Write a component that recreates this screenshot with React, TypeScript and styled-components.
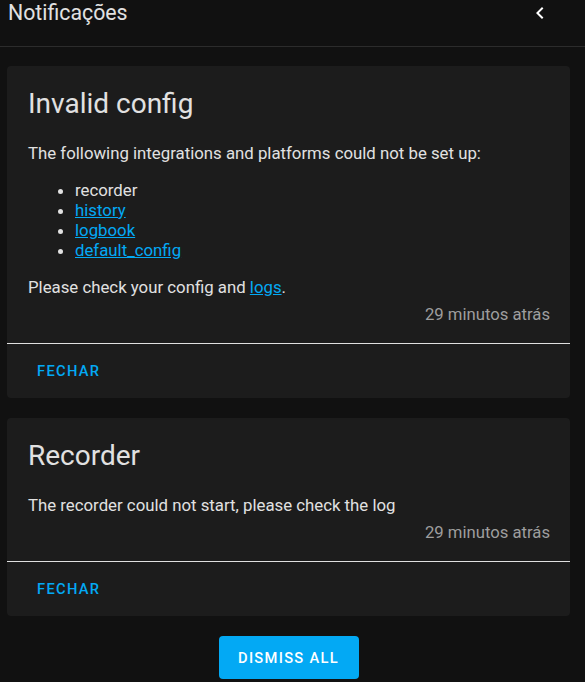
import * as React from 'react';
import styled, { createGlobalStyle } from 'styled-components';

const GlobalStyle = createGlobalStyle`
    html, body {
        margin: 0;
        padding: 0;
        background: #111111;
    }
    body {
        font-family: Roboto, "Noto Sans", "Liberation Sans", sans-serif;
        color: #e1e1e1;
        -webkit-font-smoothing: antialiased;
    }
`;

const Page = styled.div`
    width: 585px;
    height: 682px;
    overflow: hidden;
    background: #111111;
`;

const Header = styled.div`
    display: flex;
    align-items: flex-start;
    justify-content: space-between;
    height: 46px;
    padding: 0 33px 0 8px;
    border-bottom: 1px solid #2c2c2c;
    box-sizing: content-box;
`;

const Title = styled.div`
    font-size: 21.3px;
    line-height: 26px;
    color: #e1e1e1;
`;

const BackButton = styled.div`
    display: flex;
    align-items: center;
    justify-content: center;
    width: 24px;
    height: 26px;
    color: #ffffff;
`;

const Content = styled.div`
    display: flex;
    flex-direction: column;
    gap: 20px;
    padding: 19px 15px 0 7px;
`;

const Card = styled.div`
    background: #1c1c1c;
    border-radius: 4px;
    display: flex;
    flex-direction: column;
`;

const CardBody = styled.div`
    padding: 18px 20px 18px 21px;
`;

const CardTitle = styled.div`
    font-size: 28px;
    line-height: 40px;
    color: #e1e1e1;
    margin-bottom: 19px;
`;

const Text = styled.p`
    margin: 0;
    font-size: 16.8px;
    line-height: 20px;
    color: #e1e1e1;
`;

const List = styled.ul`
    margin: 17px 0;
    padding-left: 47px;
    font-size: 16.8px;
    line-height: 20px;
    color: #e1e1e1;
`;

const Link = styled.a`
    color: #03a9f4;
    text-decoration: underline;
`;

const Time = styled.div`
    margin-top: 8px;
    text-align: right;
    font-size: 16.7px;
    line-height: 20px;
    color: #9e9e9e;
`;

const Divider = styled.div`
    height: 1px;
    background: #e0e0e0;
`;

const Actions = styled.div`
    display: flex;
    align-items: center;
    height: 54px;
    padding-left: 22px;
`;

const TextButton = styled.button`
    background: none;
    border: none;
    padding: 8px;
    font-family: inherit;
    font-size: 14.7px;
    font-weight: 500;
    letter-spacing: 1.3px;
    color: #03a9f4;
    cursor: pointer;
`;

const Footer = styled.div`
    display: flex;
    justify-content: center;
    padding: 20px 15px 0 7px;
`;

const PrimaryButton = styled.button`
    width: 140px;
    height: 43px;
    border: none;
    border-radius: 4px;
    background: #03a9f4;
    color: #ffffff;
    font-family: inherit;
    font-size: 14.7px;
    font-weight: 500;
    letter-spacing: 1.3px;
    cursor: pointer;
`;

const Chevron = () => (
    <svg width="24" height="24" viewBox="0 0 24 24">
        <path d="M15.41,16.58L10.83,12L15.41,7.41L14,6L8,12L14,18L15.41,16.58Z" fill="currentColor" />
    </svg>
);

const notifications = [
    { id: 'invalid_config', title: 'Invalid config', time: '29 minutos atrás' },
    { id: 'recorder', title: 'Recorder', time: '29 minutos atrás' },
];

export default function App() {
    return (
        <Page>
            <GlobalStyle />
            <Header>
                <Title>Notificações</Title>
                <BackButton><Chevron /></BackButton>
            </Header>
            <Content>
                <Card>
                    <CardBody>
                        <CardTitle>{notifications[0].title}</CardTitle>
                        <Text>The following integrations and platforms could not be set up:</Text>
                        <List>
                            <li>recorder</li>
                            <li><Link href="#">history</Link></li>
                            <li><Link href="#">logbook</Link></li>
                            <li><Link href="#">default_config</Link></li>
                        </List>
                        <Text>Please check your config and <Link href="#">logs</Link>.</Text>
                        <Time>{notifications[0].time}</Time>
                    </CardBody>
                    <Divider />
                    <Actions><TextButton>FECHAR</TextButton></Actions>
                </Card>
                <Card>
                    <CardBody>
                        <CardTitle>{notifications[1].title}</CardTitle>
                        <Text>The recorder could not start, please check the log</Text>
                        <Time>{notifications[1].time}</Time>
                    </CardBody>
                    <Divider />
                    <Actions><TextButton>FECHAR</TextButton></Actions>
                </Card>
            </Content>
            <Footer>
                <PrimaryButton>DISMISS ALL</PrimaryButton>
            </Footer>
        </Page>
    );
}
